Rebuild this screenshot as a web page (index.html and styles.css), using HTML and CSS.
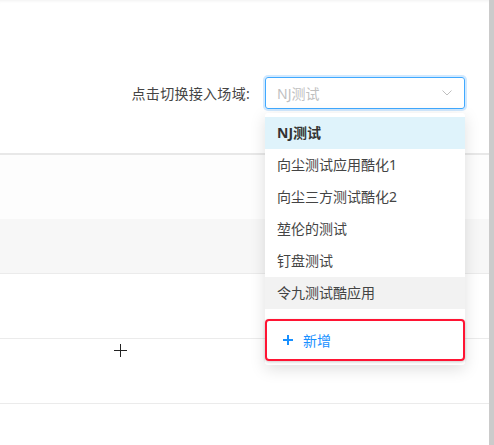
FILE: index.html
```html
<!DOCTYPE html>
<html lang="zh-CN">
<head>
    <meta charset="UTF-8">
    <title>切换接入场域</title>
    <link rel="stylesheet" href="styles.css">
</head>
<body>

    <div class="page">
        <div class="content">
            <div class="toolbar">
                <span class="label">点击切换接入场域:</span>
                <div class="select">
                    <span class="placeholder">NJ测试</span>
                    <svg class="arrow" width="10" height="6" viewBox="0 0 10 6">
                        <path d="M0.5 0.5 L5 5 L9.5 0.5" fill="none" stroke="#bfbfbf" stroke-width="1"/>
                    </svg>
                </div>
            </div>

            <!-- 表格背景 -->
            <div class="table">
                <div class="row row-top"></div>
                <div class="row row-head"></div>
                <div class="row"></div>
                <div class="row"></div>
            </div>
        </div>
        <div class="scrollbar"></div>

        <!-- 下拉菜单 -->
        <div class="dropdown">
            <div class="option selected">NJ测试</div>
            <div class="option">向尘测试应用酷化1</div>
            <div class="option">向尘三方测试酷化2</div>
            <div class="option">堃伦的测试</div>
            <div class="option">钉盘测试</div>
            <div class="option hover">令九测试酷应用</div>
            <div class="add">
                <svg class="plus" width="10" height="10" viewBox="0 0 10 10">
                    <path d="M5 0 V10 M0 5 H10" stroke="#1890ff" stroke-width="2"/>
                </svg>
                <span>新增</span>
            </div>
        </div>

        <svg class="cursor" width="13" height="13" viewBox="0 0 13 13">
            <path d="M6.5 0 V13 M0 6.5 H13" stroke="#222" stroke-width="1"/>
        </svg>
    </div>

</body>
</html>
```

FILE: styles.css
```css
body {
    margin: 0;
    background: #fff;
    font-family: "Noto Sans", "Noto Sans CJK SC", sans-serif;
    font-size: 14px;
    color: rgba(0, 0, 0, 0.75);
}

.page {
    position: relative;
    display: flex;
    height: 445px;
    overflow: hidden;
}

.content {
    flex: 1;
    background: #fff;
    box-shadow: inset 0 3px 3px -2px rgba(0, 0, 0, 0.06);
}

.scrollbar {
    width: 5px;
    background: #cbcbcb;
}

.toolbar {
    display: flex;
    justify-content: flex-end;
    align-items: center;
    padding: 77px 24px 0 0;
    height: 32px;
}

.label {
    margin-right: 15px;
    color: #444;
    letter-spacing: 0.3px;
}

.select {
    display: flex;
    align-items: center;
    justify-content: space-between;
    box-sizing: border-box;
    width: 200px;
    height: 32px;
    padding: 0 12px 0 11px;
    border: 1px solid #40a9ff;
    border-radius: 3px;
    box-shadow: 0 0 0 2px rgba(24, 144, 255, 0.2);
}

.placeholder {
    color: #bfbfbf;
}

.table {
    margin-top: 44px;
}

.row {
    height: 64px;
    border-bottom: 1px solid #ebebeb;
}

.row-top {
    height: 0;
    border-bottom: 2px solid #e8e8e8;
}

.row-head {
    height: 118px;
    background: linear-gradient(#fdfdfd 0, #fdfdfd 64px, #f7f7f7 64px);
}

.dropdown {
    position: absolute;
    left: 265px;
    top: 113px;
    width: 200px;
    padding: 4px 0 4px;
    background: #fff;
    border-radius: 3px;
    box-shadow: 0 4px 16px rgba(0, 0, 0, 0.13);
}

.option {
    height: 32px;
    line-height: 32px;
    padding: 0 12px;
    color: #444;
}

.option.selected {
    background: #dff3fb;
    font-weight: 700;
    color: #333;
}

.option.hover {
    background: #f2f2f2;
}

.add {
    display: flex;
    align-items: center;
    box-sizing: border-box;
    height: 42px;
    margin-top: 10px;
    padding-left: 16px;
    border: 2px solid #ff1433;
    border-radius: 4px;
    box-shadow: 0 1px 3px rgba(0, 0, 0, 0.2);
    color: #1890ff;
}

.plus {
    margin-right: 10px;
}

.cursor {
    position: absolute;
    left: 114px;
    top: 344px;
}
```
